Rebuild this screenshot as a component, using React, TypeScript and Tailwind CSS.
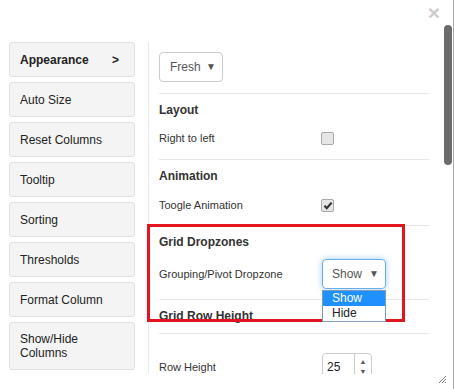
const menu = ['Auto Size', 'Reset Columns', 'Tooltip', 'Sorting', 'Thresholds', 'Format Column']

const Checkbox = ({ checked }: { checked?: boolean }) => (
  <span className="relative flex h-[13px] w-[13px] items-center justify-center rounded-[2px] border border-[#a9a9a9] bg-[#e6e6e6]">
    {checked && (
      <svg width="10" height="9" viewBox="0 0 10 9" className="absolute">
        <path d="M1.5 4.8 L3.8 7.2 L8.6 1.6" fill="none" stroke="#333" strokeWidth="2.2" />
      </svg>
    )}
  </span>
)

const Caret = () => <span className="text-[10px] leading-none text-[#555]">▼</span>

export default function App() {
  return (
    <div className="relative h-[389px] w-[454px] overflow-hidden bg-white font-['Liberation_Sans',Arial,sans-serif] text-[#222]">
      {/* body, clipped like the scroll area */}
      <div className="flex h-[374px] overflow-hidden pt-[42px]">
        {/* left menu */}
        <div className="ml-[9px] flex w-[126px] shrink-0 flex-col gap-[5px]">
          <div className="flex h-[35px] items-center justify-between rounded-[3px] border border-[#e0e0e0] bg-[#f4f4f4] pl-[10px] pr-[15px] text-[12px] font-bold">
            <span>Appearance</span>
            <span>&gt;</span>
          </div>
          {menu.map((m) => (
            <div
              key={m}
              className="flex h-[35px] items-center rounded-[3px] border border-[#e0e0e0] bg-[#f4f4f4] pl-[10px] text-[12px]"
            >
              {m}
            </div>
          ))}
          <div className="flex h-[48px] items-center rounded-[3px] border border-[#e0e0e0] bg-[#f4f4f4] pl-[10px] text-[12px] leading-[14px]">
            Show/Hide
            <br />
            Columns
          </div>
        </div>

        {/* right settings */}
        <div className="ml-[13px] h-[331px] shrink-0 border-l border-[#e8e8e8] pl-[10px]">
          <div className="w-[270px]">
            <div className="pt-[10px] pb-[11px]">
              <div className="flex h-[30px] w-[64px] items-center justify-between rounded-[4px] border border-[#ccc] pl-[10px] pr-[6px] text-[12px] text-[#555]">
                <span>Fresh</span>
                <Caret />
              </div>
            </div>

            {/* Layout */}
            <div className="border-t border-[#e8e8e8] pt-[7px] pb-[2px]">
              <div className="text-[12px] font-bold leading-[18px] text-[#333]">Layout</div>
              <div className="flex h-[38px] items-center text-[11px] text-[#333]">
                <span className="w-[162px]">Right to left</span>
                <Checkbox />
              </div>
            </div>

            {/* Animation */}
            <div className="border-t border-[#e8e8e8] pt-[7px]">
              <div className="text-[12px] font-bold leading-[18px] text-[#333]">Animation</div>
              <div className="flex h-[40px] items-center text-[11px] text-[#333]">
                <span className="w-[162px]">Toogle Animation</span>
                <Checkbox checked />
              </div>
            </div>

            {/* Grid Dropzones */}
            <div className="border-t border-[#e8e8e8] pt-[7px] pb-[2px]">
              <div className="text-[12px] font-bold leading-[18px] text-[#333]">Grid Dropzones</div>
              <div className="flex h-[46px] items-center text-[11px] text-[#333]">
                <span className="w-[163px]">Grouping/Pivot Dropzone</span>
                <div className="relative">
                  <div className="flex h-[30px] w-[64px] items-center justify-between rounded-[4px] border border-[#66afe9] pl-[9px] pr-[6px] text-[12px] text-[#555] shadow-[0_0_6px_rgba(102,175,233,0.6)]">
                    <span>Show</span>
                    <Caret />
                  </div>
                  <div className="absolute left-0 top-[31px] z-10 w-[64px] border border-[#7f9db9] bg-white text-[12px] leading-[15px]">
                    <div className="bg-[#1e90ff] pl-[9px] text-white">Show</div>
                    <div className="pl-[9px] text-[#222]">Hide</div>
                  </div>
                </div>
              </div>
            </div>

            {/* Grid Row Height */}
            <div className="border-t border-[#e8e8e8] pt-[7px] pb-[8px]">
              <div className="text-[12px] font-bold leading-[18px] text-[#333]">Grid Row Height</div>
            </div>
            <div className="border-t border-[#e8e8e8] pt-[19px]">
              <div className="flex h-[28px] items-center text-[11px] text-[#333]">
                <span className="w-[163px]">Row Height</span>
                <div className="flex h-[28px] w-[50px] rounded-[4px] border border-[#ccc]">
                  <span className="flex flex-1 items-center pl-[4px] text-[12px] text-[#222]">25</span>
                  <span className="flex w-[17px] flex-col items-center border-l border-[#ccc] pt-[3px] text-[7px] leading-[10px] text-[#555]">
                    <span>▲</span>
                    <span>▼</span>
                  </span>
                </div>
              </div>
            </div>
          </div>
        </div>
      </div>

      {/* close */}
      <span className="absolute right-[14px] top-[1px] text-[21px] font-bold leading-[24px] text-[#cdcdcd]">×</span>

      {/* scrollbar */}
      <div className="absolute left-[444px] top-[25px] h-[140px] w-[8px] rounded-full bg-[#6b6b6b]" />
      <div className="absolute right-0 top-0 h-full w-px bg-[#a8a8a8]" />

      {/* highlight box */}
      <div className="pointer-events-none absolute left-[147px] top-[224px] h-[98px] w-[258px] border-[3px] border-[#e3141f]" />

      {/* resize grip */}
      <svg width="10" height="10" viewBox="0 0 10 10" className="absolute left-[437px] top-[374px]">
        <path d="M9 2 L2 9 M9 5 L5 9 M9 8 L8 9" stroke="#777" strokeWidth="1" />
      </svg>
    </div>
  )
}
